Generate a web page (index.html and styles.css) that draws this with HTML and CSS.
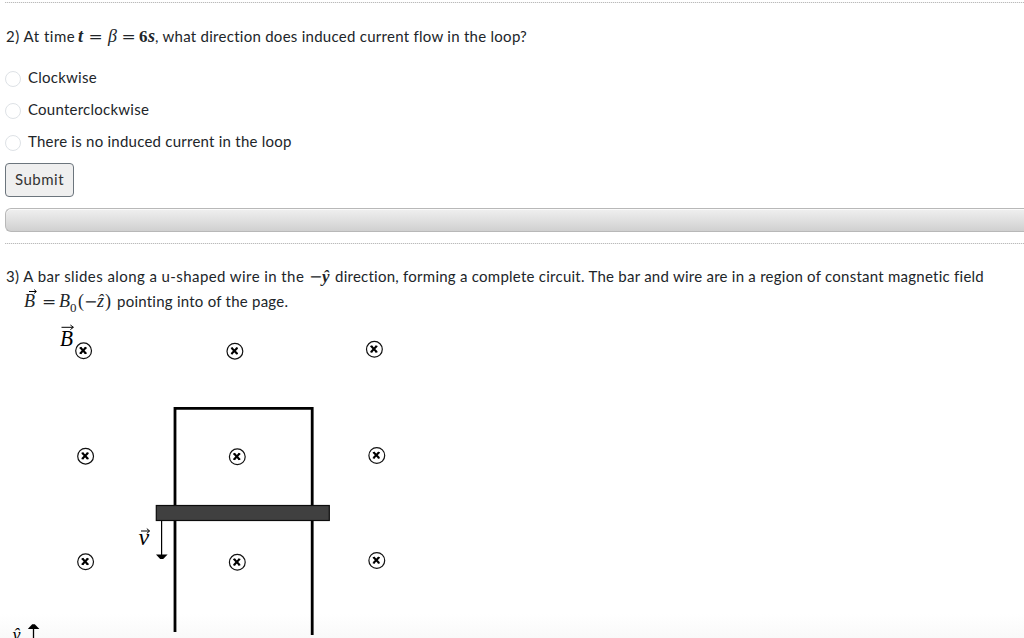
FILE: index.html
```
<!DOCTYPE html>
<html lang="en">
<head>
  <meta charset="utf-8">
  <meta name="viewport" content="width=device-width">
  <title>Induction Questions</title>
  <link rel="stylesheet" href="styles.css">
</head>
<body>
  <!-- Question 2 -->
  <section class="question first">
    <p class="prompt"><span class="lead">2) At time</span><span class="math eq-time"><b class="t"><i>t</i></b><span class="op">=</span><i class="beta">β</i><span class="op">=</span><b class="six">6</b><b class="s"><i>s</i></b></span><span class="ask">, what direction does induced current flow in the loop?</span></p>

    <form class="answers">
      <label class="choice"><input type="radio" name="current"><span>Clockwise</span></label>
      <label class="choice"><input type="radio" name="current"><span>Counterclockwise</span></label>
      <label class="choice"><input type="radio" name="current"><span>There is no induced current in the loop</span></label>
      <button type="button" class="submit">Submit</button>
    </form>
    <div class="feedback"></div>
  </section>

  <!-- Question 3 -->
  <section class="question second">
    <p class="prompt"><span class="bar-text">3) A bar slides along a u-shaped wire in the</span><span class="math neg-y"><span class="minus">−</span><b><i>ŷ</i></b></span><span class="dir-text">direction, forming a complete circuit. The bar and wire are in a region of constant magnetic field</span></p>
    <p class="prompt indent"><span class="math field"><i class="vec">B<svg class="arrow" viewBox="0 0 8 5" width="8" height="5"><path d="M0 2.5h7M5.2 .6l2.2 1.9l-2.2 1.9"/></svg></i><span class="op">=</span><span class="b0"><i>B</i><sub>0</sub></span><span class="paren">(</span><span class="minus">−</span><i class="z">ẑ</i><span>)</span></span><span class="point-text">pointing into of the page.</span></p>

    <svg class="diagram" viewBox="0 318 1024 320" width="1024" height="320">
      <defs>
        <g id="into">
          <circle r="7.9" fill="#fff" stroke="#111" stroke-width="1.2"/>
          <path d="M-3.3-3.2L2.3 2.6M2.3-3.2L-3.3 2.6" stroke="#000" stroke-width="2.1"/>
          <path d="M-4-3h2M1-3h2M-4 2.5h2M1 2.5h2" stroke="#000" stroke-width="1.2"/>
        </g>
        <linearGradient id="fade" x1="0" y1="0" x2="0" y2="1">
          <stop offset="0" stop-color="#fff"/>
          <stop offset="1" stop-color="#f9f9f9"/>
        </linearGradient>
      </defs>
      <rect x="0" y="614" width="1024" height="24" fill="url(#fade)"/>

      <!-- u-shaped wire and sliding bar -->
      <path d="M175 632V408.4H312.2V635" fill="none" stroke="#000" stroke-width="2.8"/>
      <rect x="156.3" y="505.5" width="173" height="15" fill="#404040" stroke="#0c0c0c" stroke-width="1.2"/>

      <!-- field going into the page -->
      <use href="#into" x="83.6" y="350.8"/>
      <use href="#into" x="234.9" y="351.2"/>
      <use href="#into" x="374.4" y="349.3"/>
      <use href="#into" x="85.6" y="456.2"/>
      <use href="#into" x="237.3" y="456.8"/>
      <use href="#into" x="376.8" y="455.5"/>
      <use href="#into" x="85.6" y="561.8"/>
      <use href="#into" x="237.3" y="562.3"/>
      <use href="#into" x="376.8" y="560.5"/>

      <!-- velocity -->
      <path d="M161.6 521V555" stroke="#000" stroke-width="1.2"/>
      <path d="M156 554.4h11.6l-4.4 4.6h-3z"/>
      <text class="label" x="138.5" y="545.3" font-size="24">v</text>
      <path class="line" d="M141 531h8.4M146.8 528.6l2.8 2.4l-2.8 2.4"/>

      <text class="label" x="60" y="346" font-size="23" textLength="13" lengthAdjust="spacingAndGlyphs">B</text>
      <path class="line" d="M61.5 327.3h11.7M70.4 325l3 2.3l-3 2.3"/>

      <!-- axis -->
      <text class="label" x="12.5" y="641" font-size="18">ŷ</text>
      <path d="M33.5 638V627" stroke="#000" stroke-width="1.3"/>
      <path d="M27.8 629h11.6l-4.6-4.8h-2.6z"/>
    </svg>
  </section>
</body>
</html>
```
FILE: styles.css
```
* {
  box-sizing: border-box;
}

body {
  margin: 0;
  background-color: #fff;
  color: #212529;
  font-family: Lato, "Liberation Sans", sans-serif;
  font-size: 15px;
  line-height: 24px;
  letter-spacing: 0.24px;
  overflow: hidden;
}

/* Questions */
.question {
  width: 1024px;
}

.first {
  padding-top: 2px;
}

.first::before,
.second::before {
  content: "";
  display: block;
  height: 1px;
  margin-left: 5px;
  background: repeating-linear-gradient(to right, #bbb 0 1px, #eee 1px 2px);
}

.prompt {
  display: flex;
  align-items: baseline;
  height: 25px;
  margin: 0;
  padding-left: 6px;
  white-space: nowrap;
}

.first .prompt {
  margin-top: 21px;
}

.second .prompt {
  margin-top: 20px;
}

.second .prompt.indent {
  margin: 0 0 4px;
  padding-left: 24px;
}

.lead {
  width: 72px;
  letter-spacing: 0.5px;
}

.ask {
  margin-left: -1px;
  letter-spacing: 0.27px;
}

.bar-text {
  width: 303px;
  letter-spacing: 0.42px;
}

.dir-text {
  letter-spacing: 0.25px;
}

/* Formulas */
.math {
  display: flex;
  align-items: baseline;
  flex-shrink: 0;
  font-family: "Liberation Serif", serif;
  font-size: 18px;
  letter-spacing: 0;
}

.math > * {
  flex-shrink: 0;
}

.eq-time {
  width: 78px;
}

.t {
  width: 8px;
}

.op {
  width: 19px;
  text-align: center;
  font-family: "DejaVu Serif", serif;
  font-size: 17px;
}

.eq-time .op {
  margin-right: 3px;
}

.beta {
  width: 12px;
  margin-right: -1px;
}

.eq-time .beta + .op {
  margin-right: 1px;
}

.six {
  width: 9px;
  font-size: 17px;
}

.s {
  width: 8px;
}

.neg-y {
  width: 26px;
}

.neg-y b {
  font-size: 17px;
}

.minus {
  width: 13px;
  font-family: "DejaVu Serif", serif;
  font-size: 16px;
}

.field {
  width: 93px;
}

.vec {
  position: relative;
  width: 15px;
}

.arrow {
  position: absolute;
  top: 0;
  left: 5px;
}

.field .op {
  width: 20px;
}

.b0 {
  width: 19px;
}

.b0 sub {
  font-size: 13px;
  line-height: 0;
}

.z {
  width: 8px;
}

/* Answers */
.answers {
  margin-top: 13px;
}

.choice {
  display: flex;
  align-items: center;
  height: 32px;
  padding-left: 5px;
}

.choice span {
  padding-bottom: 2px;
}

.choice input {
  appearance: none;
  width: 16px;
  height: 16px;
  margin: 1px 7px 0 0;
  border: 1px solid #dee2e6;
  border-radius: 50%;
}

.submit {
  display: block;
  width: 69px;
  height: 34px;
  margin: 5px 0 0 5px;
  padding: 0 0 2px;
  border: 1px solid #6c757d;
  border-radius: 4px;
  background-color: #efefef;
  color: #333;
  font-family: inherit;
  font-size: 15px;
  letter-spacing: 0.5px;
}

.feedback {
  height: 24px;
  margin: 11px 0 11px 5px;
  border: 1px solid #b8b8b8;
  border-right: 0;
  border-radius: 6px 0 0 6px;
  background: linear-gradient(#f0f0f0, #d0d0d0);
  box-shadow: inset 0 1px #fafafa;
}

/* Diagram */
.diagram {
  display: block;
}

.label {
  font-family: "Liberation Serif", serif;
  font-style: italic;
  letter-spacing: 0;
}

.line,
.arrow path {
  fill: none;
  stroke: #000;
  stroke-width: 1;
}
```
